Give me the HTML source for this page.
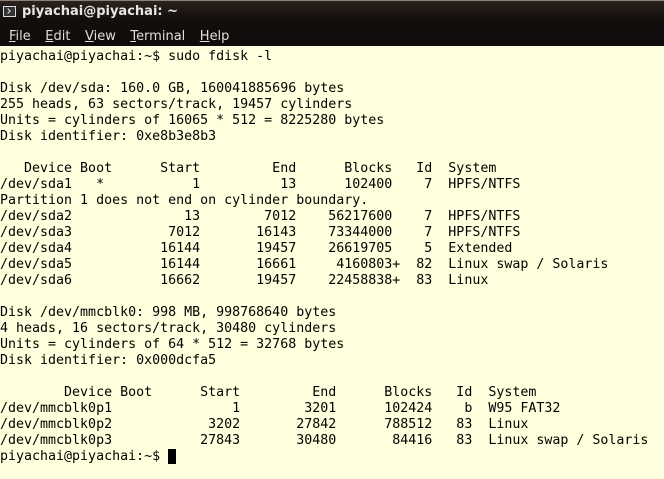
<!DOCTYPE html>
<html><head><meta charset="utf-8"><style>
html,body{margin:0;padding:0;width:664px;height:479px;overflow:hidden;background:#ffffdd;}
#bar{position:absolute;left:0;top:0;width:664px;height:46px;background:linear-gradient(#2c221f,#120e0d 40%,#100c0b);border-top:1px solid #8a8078;box-sizing:border-box;}
#title{position:absolute;left:22px;top:3px;color:#e8e6e2;font:bold 13px "DejaVu Sans","Liberation Sans",sans-serif;}
#icon{position:absolute;left:3px;top:5px;width:13px;height:11px;border:1px solid #ddd;background:#333;box-sizing:border-box;}
#icon:after{content:"";position:absolute;left:2px;top:2px;width:3px;height:3px;border-right:1px solid #ddd;border-bottom:1px solid #ddd;transform:rotate(-45deg);}
#menu{position:absolute;left:9px;top:28px;color:#e0ddd8;font:13px "DejaVu Sans","Liberation Sans",sans-serif;word-spacing:0;}
#menu span{margin-right:14.5px;}
#menu u{text-decoration:underline;}
pre{position:absolute;left:0;top:49px;margin:0;font-family:"DejaVu Sans Mono","Liberation Mono",monospace;font-size:13.3px;line-height:16px;color:#000;}
.cur{background:#000;}
</style></head><body>
<div id="bar"><div id="icon"></div><div id="title">piyachai@piyachai: ~</div>
<div id="menu"><span><u>F</u>ile</span><span><u>E</u>dit</span><span><u>V</u>iew</span><span><u>T</u>erminal</span><span><u>H</u>elp</span></div></div>
<pre>piyachai@piyachai:~$ sudo fdisk -l

Disk /dev/sda: 160.0 GB, 160041885696 bytes
255 heads, 63 sectors/track, 19457 cylinders
Units = cylinders of 16065 * 512 = 8225280 bytes
Disk identifier: 0xe8b3e8b3

   Device Boot      Start         End      Blocks   Id  System
/dev/sda1   *           1          13      102400    7  HPFS/NTFS
Partition 1 does not end on cylinder boundary.
/dev/sda2              13        7012    56217600    7  HPFS/NTFS
/dev/sda3            7012       16143    73344000    7  HPFS/NTFS
/dev/sda4           16144       19457    26619705    5  Extended
/dev/sda5           16144       16661     4160803+  82  Linux swap / Solaris
/dev/sda6           16662       19457    22458838+  83  Linux

Disk /dev/mmcblk0: 998 MB, 998768640 bytes
4 heads, 16 sectors/track, 30480 cylinders
Units = cylinders of 64 * 512 = 32768 bytes
Disk identifier: 0x000dcfa5

        Device Boot      Start         End      Blocks   Id  System
/dev/mmcblk0p1               1        3201      102424    b  W95 FAT32
/dev/mmcblk0p2            3202       27842      788512   83  Linux
/dev/mmcblk0p3           27843       30480       84416   83  Linux swap / Solaris
piyachai@piyachai:~$ <span class="cur"> </span></pre>
</body></html>
